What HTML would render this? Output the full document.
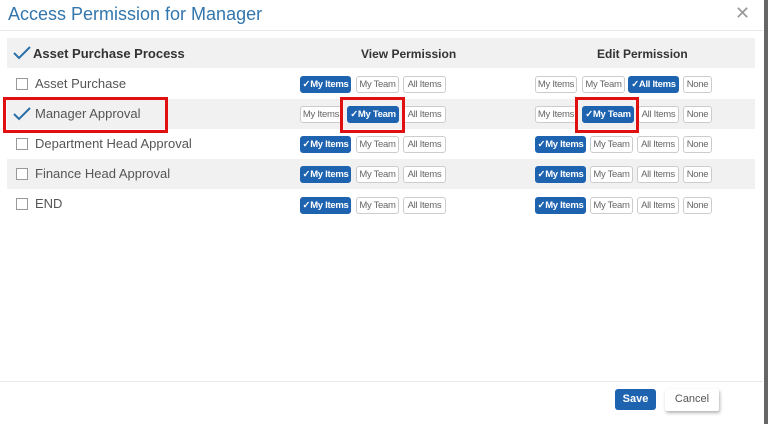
<!DOCTYPE html>
<html><head><meta charset="utf-8"><style>
*{box-sizing:border-box;margin:0;padding:0}
body{width:768px;height:424px;background:#fff;font-family:"Liberation Sans",sans-serif;position:relative;overflow:hidden}
.abs{position:absolute}
.title{left:8px;top:4px;font-size:18px;color:#3276ad}
.x{left:735px;top:3px;font-size:18px;color:#999}
.hr{left:0;width:763px;height:1px;background:#e8e8e8}
.row{left:7px;width:748px;height:30px}
.g{background:#f1f1f1}
.lbl{font-size:13px;color:#555}
.cb{width:12px;height:12px;border:1px solid #999;background:#fff}
.b{position:absolute;height:17px;border:1px solid #ccc;border-radius:3px;font-size:9.5px;color:#666;text-align:center;line-height:15px;background:#fff;letter-spacing:-0.3px;white-space:nowrap;overflow:hidden}
.b.on{background:#1e63b0;border-color:#1e63b0;color:#fff;font-weight:bold}
.red{border:3px solid #e01010}
</style></head><body>
<div class="abs title">Access Permission for Manager</div>
<div class="abs x">✕</div>
<div class="abs hr" style="top:30px"></div>
<div class="abs row g" style="top:38px"></div>
<div class="abs row g" style="top:99px"></div>
<div class="abs row g" style="top:159px"></div>
<svg class="abs" style="left:12px;top:45px" width="20" height="16"><path d="M2 8 L7 13 L18 2" stroke="#2a6fa8" stroke-width="2" fill="none"/></svg>
<div class="abs lbl" style="left:33px;top:46px;font-weight:bold;color:#333">Asset Purchase Process</div>
<div class="abs lbl" style="left:361px;top:47px;font-weight:bold;color:#333;font-size:12px">View Permission</div>
<div class="abs lbl" style="left:597px;top:47px;font-weight:bold;color:#333;font-size:12px">Edit Permission</div>

<div class="abs cb" style="left:16px;top:78px"></div><div class="abs lbl" style="left:35px;top:76px">Asset Purchase</div>
<svg class="abs" style="left:12px;top:106px" width="20" height="16"><path d="M2 8 L7 13 L18 2" stroke="#2a6fa8" stroke-width="2" fill="none"/></svg>
<div class="abs lbl" style="left:35px;top:106px">Manager Approval</div>
<div class="abs cb" style="left:16px;top:138px"></div><div class="abs lbl" style="left:35px;top:136px">Department Head Approval</div>
<div class="abs cb" style="left:16px;top:168px"></div><div class="abs lbl" style="left:35px;top:166px">Finance Head Approval</div>
<div class="abs cb" style="left:16px;top:198px"></div><div class="abs lbl" style="left:35px;top:196px">END</div>

<div class="b on" style="left:300px;top:76px;width:51px">✓My Items</div>
<div class="b" style="left:356px;top:76px;width:43px">My Team</div>
<div class="b" style="left:403px;top:76px;width:43px">All Items</div>
<div class="b" style="left:535px;top:76px;width:42px">My Items</div>
<div class="b" style="left:582px;top:76px;width:43px">My Team</div>
<div class="b on" style="left:628px;top:76px;width:51px">✓All Items</div>
<div class="b" style="left:683px;top:76px;width:29px">None</div>

<div class="b" style="left:300px;top:106px;width:42px">My Items</div>
<div class="b on" style="left:347px;top:106px;width:52px">✓My Team</div>
<div class="b" style="left:403px;top:106px;width:43px">All Items</div>
<div class="b" style="left:535px;top:106px;width:42px">My Items</div>
<div class="b on" style="left:582px;top:106px;width:52px">✓My Team</div>
<div class="b" style="left:638px;top:106px;width:41px">All Items</div>
<div class="b" style="left:683px;top:106px;width:29px">None</div>

<div class="b on" style="left:300px;top:136px;width:51px">✓My Items</div><div class="b" style="left:356px;top:136px;width:43px">My Team</div><div class="b" style="left:403px;top:136px;width:43px">All Items</div>
<div class="b on" style="left:535px;top:136px;width:51px">✓My Items</div><div class="b" style="left:590px;top:136px;width:43px">My Team</div><div class="b" style="left:637px;top:136px;width:42px">All Items</div><div class="b" style="left:683px;top:136px;width:29px">None</div>
<div class="b on" style="left:300px;top:166px;width:51px">✓My Items</div><div class="b" style="left:356px;top:166px;width:43px">My Team</div><div class="b" style="left:403px;top:166px;width:43px">All Items</div>
<div class="b on" style="left:535px;top:166px;width:51px">✓My Items</div><div class="b" style="left:590px;top:166px;width:43px">My Team</div><div class="b" style="left:637px;top:166px;width:42px">All Items</div><div class="b" style="left:683px;top:166px;width:29px">None</div>
<div class="b on" style="left:300px;top:197px;width:51px">✓My Items</div><div class="b" style="left:356px;top:197px;width:43px">My Team</div><div class="b" style="left:403px;top:197px;width:43px">All Items</div>
<div class="b on" style="left:535px;top:197px;width:51px">✓My Items</div><div class="b" style="left:590px;top:197px;width:43px">My Team</div><div class="b" style="left:637px;top:197px;width:42px">All Items</div><div class="b" style="left:683px;top:197px;width:29px">None</div>

<div class="abs red" style="left:3px;top:97px;width:165px;height:36px"></div>
<div class="abs red" style="left:340px;top:97px;width:65px;height:36px"></div>
<div class="abs red" style="left:575px;top:97px;width:64px;height:36px"></div>

<div class="abs hr" style="top:381px"></div>
<div class="abs" style="left:615px;top:389px;width:41px;height:21px;background:#1e63b0;border-radius:3px;color:#fff;font-size:11px;font-weight:bold;text-align:center;line-height:21px">Save</div>
<div class="abs" style="left:665px;top:389px;width:54px;height:22px;background:#fff;border-radius:2px;box-shadow:1px 2px 3px rgba(0,0,0,.3);color:#555;font-size:11px;text-align:center;line-height:21px">Cancel</div>
<div class="abs" style="left:764px;top:0;width:4px;height:424px;background:#666"></div>
</body></html>
